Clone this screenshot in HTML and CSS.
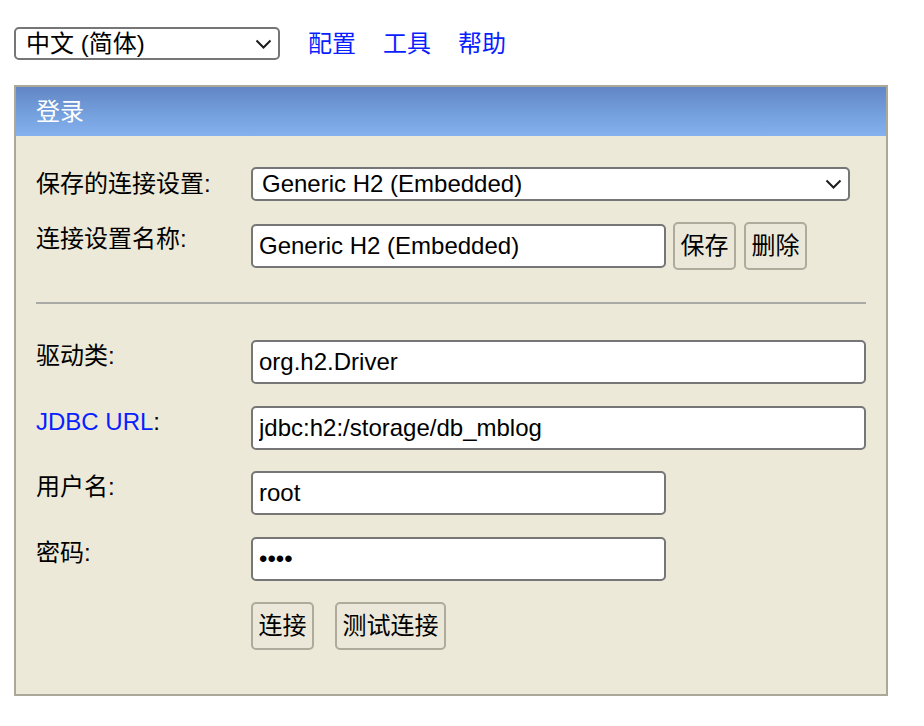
FILE: index.html
```
<!DOCTYPE html>
<html lang="zh-CN">
<head>
<meta charset="utf-8">
<title>H2 Console</title>
<link rel="stylesheet" href="styles.css">
</head>
<body>
<form class="page" onsubmit="return false">
  <div class="topbar">
    <span class="select-wrap select-lang">
      <select class="select"><option>中文 (简体)</option></select>
      <svg class="chev" width="17" height="10" viewBox="0 0 17 10"><path d="M1.5 1.5 L8.5 8.5 L15.5 1.5"/></svg>
    </span>
    <a href="#" class="toplink">配置</a>
    <a href="#" class="toplink">工具</a>
    <a href="#" class="toplink">帮助</a>
  </div>

  <div class="login">
    <div class="login-head">登录</div>
    <div class="login-body">
      <div class="row row-select">
        <label class="label">保存的连接设置:</label>
        <div class="field">
          <span class="select-wrap select-setting">
            <select class="select"><option>Generic H2 (Embedded)</option></select>
            <svg class="chev" width="17" height="10" viewBox="0 0 17 10"><path d="M1.5 1.5 L8.5 8.5 L15.5 1.5"/></svg>
          </span>
        </div>
      </div>

      <div class="row row-name">
        <label class="label">连接设置名称:</label>
        <div class="field field-inline">
          <input class="input input-short" type="text" value="Generic H2 (Embedded)">
          <button type="button" class="btn btn-save">保存</button>
          <button type="button" class="btn btn-remove">删除</button>
        </div>
      </div>

      <hr class="sep">

      <div class="row row-driver">
        <label class="label label-input">驱动类:</label>
        <div class="field">
          <input class="input input-long" type="text" value="org.h2.Driver">
        </div>
      </div>

      <div class="row row-gap22">
        <label class="label label-input"><a href="#" class="inlink">JDBC URL</a>:</label>
        <div class="field">
          <input class="input input-long" type="text" value="jdbc:h2:/storage/db_mblog">
        </div>
      </div>

      <div class="row row-gap21">
        <label class="label label-input">用户名:</label>
        <div class="field">
          <input class="input input-short" type="text" value="root">
        </div>
      </div>

      <div class="row row-gap22">
        <label class="label label-input">密码:</label>
        <div class="field">
          <input class="input input-short" type="password" value="root">
        </div>
      </div>

      <div class="row row-gap21">
        <span class="label"></span>
        <div class="field field-inline">
          <button type="submit" class="btn">连接</button>
          <button type="button" class="btn btn-test">测试连接</button>
        </div>
      </div>
    </div>
  </div>
</form>
</body>
</html>
```

FILE: styles.css
```
* {
  box-sizing: border-box;
}

html, body {
  margin: 0;
  padding: 0;
  background: #ffffff;
}

body,
input,
select,
button {
  font-family: "Liberation Sans", "Noto Sans CJK SC", sans-serif;
  font-size: 24px;
  line-height: 28px;
  color: #000;
}

.page {
  padding: 27px 0 0 14px;
  margin: 0;
}

.topbar {
  display: flex;
  align-items: center;
  height: 33px;
}

.select-wrap {
  position: relative;
  display: inline-block;
}

.select {
  -webkit-appearance: none;
  appearance: none;
  display: block;
  width: 100%;
  height: 100%;
  margin: 0;
  padding: 0 34px 0 10px;
  background: #fff;
  border: 2px solid #767676;
  border-radius: 5px;
  outline: none;
}

.chev {
  position: absolute;
  right: 8px;
  top: 50%;
  margin-top: -5px;
  pointer-events: none;
}

.chev path {
  fill: none;
  stroke: #1c1c1c;
  stroke-width: 2;
}

.select-lang {
  width: 266px;
  height: 33px;
}

.toplink {
  color: #0a1eff;
  text-decoration: none;
  margin-left: 27px;
}

.toplink:first-of-type {
  margin-left: 28px;
}

.login {
  margin-top: 25px;
  width: 874px;
  border: 2px solid #aca899;
  background: #ece9d8;
}

.login-head {
  height: 49px;
  padding: 11px 20px 0;
  color: #fff;
  background: linear-gradient(to bottom, #6386c5 0%, #74a0dd 55%, #84b2ef 100%);
}

.login-body {
  padding: 31px 20px 44px;
}

.row {
  display: flex;
  align-items: flex-start;
}

.label {
  flex: 0 0 215px;
  width: 215px;
  padding-top: 3px;
}

.label-input {
  padding-top: 2px;
}

.inlink {
  color: #0a1eff;
  text-decoration: none;
}

.field {
  display: flex;
  align-items: flex-start;
}

.field-inline {
  align-items: center;
}

.select-setting {
  width: 599px;
  height: 34px;
}

.select-setting .select {
  padding-left: 9px;
}

.input {
  height: 44px;
  margin: 0;
  padding: 0 6px;
  background: #fff;
  border: 2px solid #767676;
  border-radius: 5px;
  outline: none;
}

.input-short {
  width: 415px;
}

.input-long {
  width: 615px;
}

.btn {
  height: 48px;
  margin: 0;
  padding: 0 5.5px;
  background: #ebe8da;
  border: 2px solid #aeab9c;
  border-radius: 5px;
}

.btn-save {
  margin-left: 7px;
}

.btn-remove {
  margin-left: 8px;
}

.btn-test {
  margin-left: 21px;
}

.row-name {
  margin-top: 21px;
}

.sep {
  margin: 32px 0 0;
  height: 0;
  border: 0;
  border-top: 2px solid #a9a9a6;
}

.row-driver {
  margin-top: 36px;
}

.row-gap22 {
  margin-top: 22px;
}

.row-gap21 {
  margin-top: 21px;
}
```
